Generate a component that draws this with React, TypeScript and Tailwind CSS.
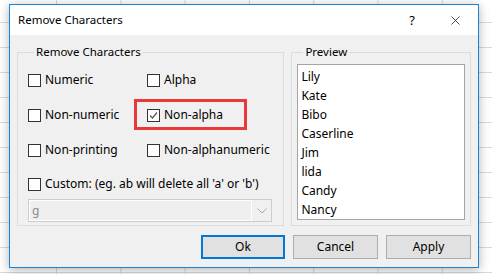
import { X } from "lucide-react";

function Box({ checked }: { checked?: boolean }) {
  return (
    <span className="w-[13px] h-[13px] border border-[#333333] bg-white flex items-center justify-center shrink-0">
      {checked && (
        <svg width="11" height="11" viewBox="0 0 11 11">
          <path d="M2 5.5 L4.5 8 L9 2.5" fill="none" stroke="#555" strokeWidth="1.2" />
        </svg>
      )}
    </span>
  );
}

function Check({ label, checked }: { label: string; checked?: boolean }) {
  return (
    <label className="flex items-center gap-[4px] h-[16px]">
      <Box checked={checked} />
      <span>{label}</span>
    </label>
  );
}

const NAMES = ["Lily", "Kate", "Bibo", "Caserline", "Jim", "lida", "Candy", "Nancy"];

export default function App() {
  return (
    <div className="w-[492px] h-[274px] overflow-hidden bg-white bg-[linear-gradient(to_right,#d9d9d9_1px,transparent_1px),linear-gradient(to_bottom,#d9d9d9_1px,transparent_1px)] bg-[size:64.3px_25px] bg-[position:56px_22px] pl-[9px] pt-[4px] font-['Noto_Sans',sans-serif] text-[12px] text-black leading-[16px]">
      <div className="w-[470px] h-[264px] border border-[#1883d7] bg-[#f0f0f0] flex flex-col shadow-[0_2px_10px_rgba(0,0,0,0.3)]">
        <div className="h-[30px] bg-white flex items-center pl-[8px] shrink-0">
          <span className="text-[11.5px]">Remove Characters</span>
          <span className="ml-auto mr-[33px] text-[13px]">?</span>
          <X size={15} strokeWidth={1.1} className="mr-[15px]" />
        </div>

        <div className="flex px-[7px] mt-[9px] gap-[7px]">
          <fieldset className="w-[268px] h-[182px] border border-[#dcdcdc] pl-[10px] relative">
            <legend className="ml-[6px] px-[2px] text-[11.5px]">Remove Characters</legend>
            <div className="grid grid-cols-[119px_1fr] gap-y-[19px] mt-[12px]">
              <Check label="Numeric" />
              <Check label="Alpha" />
              <Check label="Non-numeric" />
              <Check label="Non-alpha" checked />
              <Check label="Non-printing" />
              <Check label="Non-alphanumeric" />
            </div>
            <div className="absolute left-[116px] top-[39px] w-[113px] h-[31px] border-[3px] border-[#e8393b]" />
            <div className="mt-[18px]">
              <Check label="Custom: (eg. ab will delete all 'a' or 'b')" />
            </div>
            <div className="mt-[7px] w-[244px] h-[23px] border border-[#cccccc] bg-[#f0f0f0] flex">
              <div className="flex-1 border border-white bg-[#efefef] text-[#8a8a8a] pl-[2px] leading-[19px]">g</div>
              <div className="w-[19px] flex items-center justify-center">
                <svg width="10" height="6" viewBox="0 0 10 6">
                  <path d="M0.5 0.5 L5 5 L9.5 0.5" fill="none" stroke="#a8a8a8" strokeWidth="1" />
                </svg>
              </div>
            </div>
          </fieldset>

          <fieldset className="w-[180px] h-[182px] border border-[#dcdcdc] px-[5px]">
            <legend className="ml-[6px] px-[2px] text-[11.5px]">Preview</legend>
            <div className="mt-[4px] h-[156px] border border-[#a5a5a5] bg-white pt-[2px] pl-[3px]">
              {NAMES.map((n) => (
                <div key={n} className="h-[19px] leading-[19px]">
                  {n}
                </div>
              ))}
            </div>
          </fieldset>
        </div>

        <div className="flex justify-end gap-[8px] pr-[7px] mt-[9px]">
          <button className="w-[84px] h-[24px] bg-[#e1e1e1] border-2 border-[#0078d7]">Ok</button>
          <button className="w-[85px] h-[24px] bg-[#e1e1e1] border border-[#adadad]">Cancel</button>
          <button className="w-[85px] h-[24px] bg-[#e1e1e1] border border-[#adadad]">Apply</button>
        </div>
      </div>
    </div>
  );
}
